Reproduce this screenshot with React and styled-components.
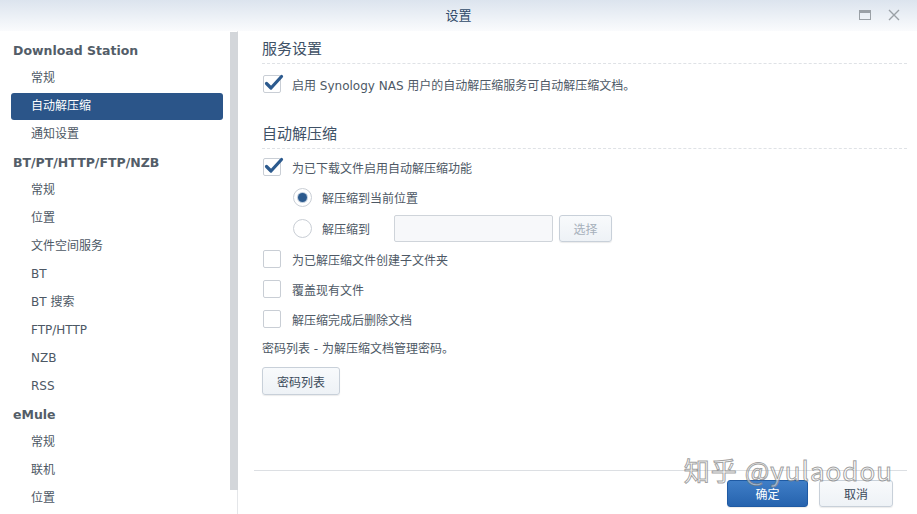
import styled, { createGlobalStyle } from "styled-components";

const GlobalStyle = createGlobalStyle`
  html, body {
    margin: 0;
    padding: 0;
    background: #ffffff;
  }
  body {
    font-family: "DejaVu Sans", "Noto Sans CJK SC", sans-serif;
  }
`;

const navItems = [
  { label: "Download Station", group: true },
  { label: "常规" },
  { label: "自动解压缩", active: true },
  { label: "通知设置" },
  { label: "BT/PT/HTTP/FTP/NZB", group: true },
  { label: "常规" },
  { label: "位置" },
  { label: "文件空间服务" },
  { label: "BT" },
  { label: "BT 搜索" },
  { label: "FTP/HTTP" },
  { label: "NZB" },
  { label: "RSS" },
  { label: "eMule", group: true },
  { label: "常规" },
  { label: "联机" },
  { label: "位置" },
];

function CheckBox({ checked }) {
  return (
    <Box>
      {checked && (
        <svg width="22" height="20" viewBox="0 0 22 20">
          <path
            d="M3.5 10.5 L8 15 L18.5 3.5"
            fill="none"
            stroke="#2c5a8e"
            strokeWidth="3.2"
            strokeLinecap="round"
            strokeLinejoin="round"
          />
        </svg>
      )}
    </Box>
  );
}

function Radio({ checked }) {
  return <RadioCircle>{checked && <RadioDot />}</RadioCircle>;
}

export default function App() {
  return (
    <>
      <GlobalStyle />
      <Window>
        <TitleBar>
          <Title>设置</Title>
          <WinControls>
            <svg width="12" height="10" viewBox="0 0 12 10">
              <rect x="0.5" y="0.5" width="11" height="9" fill="none" stroke="#9aa0a6" />
              <rect x="0.5" y="0.5" width="11" height="2.5" fill="#9aa0a6" />
            </svg>
            <svg width="12" height="12" viewBox="0 0 12 12">
              <path d="M1 1 L11 11 M11 1 L1 11" stroke="#9aa0a6" strokeWidth="1.4" />
            </svg>
          </WinControls>
        </TitleBar>
        <Body>
          <Sidebar>
            <NavList>
              {navItems.map((item, i) =>
                item.group ? (
                  <GroupLabel key={i}>{item.label}</GroupLabel>
                ) : (
                  <NavItem key={i} $active={item.active}>
                    {item.label}
                  </NavItem>
                )
              )}
            </NavList>
            <ScrollTrack>
              <ScrollThumb />
            </ScrollTrack>
          </Sidebar>
          <Main>
            <Content>
              <Heading>服务设置</Heading>
              <Row $mt={5}>
                <CheckBox checked />
                <Label>启用 Synology NAS 用户的自动解压缩服务可自动解压缩文档。</Label>
              </Row>
              <Heading $mt={17}>自动解压缩</Heading>
              <Row $mt={3}>
                <CheckBox checked />
                <Label>为已下载文件启用自动解压缩功能</Label>
              </Row>
              <Row $indent $h={31}>
                <Radio checked />
                <Label>解压缩到当前位置</Label>
              </Row>
              <Row $indent $h={31}>
                <Radio />
                <Label $w={72}>解压缩到</Label>
                <TextInput />
                <Button $w={53} $disabled>
                  选择
                </Button>
              </Row>
              <Row>
                <CheckBox />
                <Label>为已解压缩文件创建子文件夹</Label>
              </Row>
              <Row>
                <CheckBox />
                <Label>覆盖现有文件</Label>
              </Row>
              <Row>
                <CheckBox />
                <Label>解压缩完成后删除文档</Label>
              </Row>
              <Note>密码列表 - 为解压缩文档管理密码。</Note>
              <Button $w={78} $h={28}>密码列表</Button>
            </Content>
            <Footer>
              <Button $w={81} $primary>
                确定
              </Button>
              <Button $w={74}>取消</Button>
            </Footer>
          </Main>
        </Body>
        <Watermark>知乎 @yulaodou</Watermark>
      </Window>
    </>
  );
}

const Window = styled.div`
  position: relative;
  width: 917px;
  height: 514px;
  display: flex;
  flex-direction: column;
  overflow: hidden;
  background: #fff;
  color: #4d5865;
  font-size: 12px;
`;

const TitleBar = styled.div`
  height: 31px;
  flex-shrink: 0;
  display: flex;
  align-items: center;
  justify-content: center;
  position: relative;
  background: linear-gradient(to bottom, #dce4ee 0%, #eef2f7 60%, #fafbfd 100%);
`;

const Title = styled.div`
  font-size: 13px;
  color: #2f4a68;
  margin-top: -2px;
`;

const WinControls = styled.div`
  position: absolute;
  right: 17px;
  top: 9px;
  display: flex;
  align-items: center;
  gap: 17px;
`;

const Body = styled.div`
  flex: 1;
  display: flex;
  min-height: 0;
`;

const Sidebar = styled.div`
  width: 238px;
  display: flex;
  flex-shrink: 0;
`;

const NavList = styled.div`
  width: 230px;
  padding-top: 6px;
  display: flex;
  flex-direction: column;
`;

const GroupLabel = styled.div`
  height: 28px;
  line-height: 28px;
  padding-left: 13px;
  font-weight: bold;
  font-size: 12.5px;
  color: #535d68;
  white-space: nowrap;
`;

const NavItem = styled.div`
  height: 27px;
  line-height: 27px;
  margin: 0 7px 1px 11px;
  padding-left: 20px;
  border-radius: 3px;
  font-size: 12px;
  color: ${(p) => (p.$active ? "#ffffff" : "#4d5865")};
  background: ${(p) => (p.$active ? "#2b5589" : "transparent")};
`;

const ScrollTrack = styled.div`
  width: 8px;
  border-right: 1px solid #e4e6e9;
  box-sizing: border-box;
`;

const ScrollThumb = styled.div`
  margin-top: 1px;
  height: 458px;
  width: 8px;
  background: #d3d6da;
`;

const Main = styled.div`
  flex: 1;
  display: flex;
  flex-direction: column;
  margin: 0 10px 0 16px;
`;

const Content = styled.div`
  flex: 1;
  padding-left: 8px;
  display: flex;
  flex-direction: column;
  align-items: flex-start;
`;

const Heading = styled.div`
  align-self: stretch;
  margin-top: ${(p) => p.$mt || 0}px;
  padding: 9px 0 5px;
  line-height: 18px;
  font-size: 15px;
  color: #3e5166;
  border-bottom: 1px dashed #dfe2e6;
`;

const Row = styled.div`
  display: flex;
  align-items: center;
  height: ${(p) => p.$h || 30}px;
  margin-top: ${(p) => p.$mt || 0}px;
  padding-left: ${(p) => (p.$indent ? 31 : 1)}px;
`;

const Box = styled.div`
  position: relative;
  width: 18px;
  height: 18px;
  box-sizing: border-box;
  border: 1px solid #c9ced5;
  border-radius: 2px;
  background: #fff;
  margin-right: 11px;
  flex-shrink: 0;

  svg {
    position: absolute;
    left: -1px;
    top: -3px;
  }
`;

const RadioCircle = styled.div`
  width: 19px;
  height: 19px;
  box-sizing: border-box;
  border: 1px solid #c9ced5;
  border-radius: 50%;
  background: #fff;
  display: flex;
  align-items: center;
  justify-content: center;
  margin-right: 10px;
  flex-shrink: 0;
`;

const RadioDot = styled.div`
  width: 9px;
  height: 9px;
  border-radius: 50%;
  background: #2c5a8e;
  box-shadow: 0 0 0 1px rgba(44, 90, 142, 0.3);
`;

const Label = styled.span`
  font-size: 12px;
  color: #4d5865;
  width: ${(p) => (p.$w ? `${p.$w}px` : "auto")};
  white-space: nowrap;
`;

const TextInput = styled.div`
  width: 159px;
  height: 27px;
  box-sizing: border-box;
  border: 1px solid #cfd4da;
  border-radius: 2px;
  background: #f7f8fa;
  margin-right: 6px;
`;

const Button = styled.div`
  width: ${(p) => p.$w}px;
  height: ${(p) => p.$h || 27}px;
  box-sizing: border-box;
  display: flex;
  align-items: center;
  justify-content: center;
  border-radius: 3px;
  font-size: 12px;
  border: 1px solid ${(p) => (p.$primary ? "#1f5aa3" : "#c8d0d9")};
  color: ${(p) => (p.$primary ? "#fff" : p.$disabled ? "#a6b0bb" : "#3b4a5b")};
  background: ${(p) =>
    p.$primary
      ? "linear-gradient(to bottom, #3f7ec7, #2663ae)"
      : "linear-gradient(to bottom, #f8fafc, #eef2f6)"};
  box-shadow: 0 1px 1px rgba(0, 0, 0, 0.08);
`;

const Note = styled.div`
  height: 30px;
  line-height: 30px;
  font-size: 12px;
  color: #4d5865;
  margin-bottom: 3px;
`;

const Footer = styled.div`
  height: 44px;
  box-sizing: border-box;
  border-top: 1px solid #dcdfe3;
  display: flex;
  justify-content: flex-end;
  gap: 11px;
  padding: 9px 14px 0 0;
`;

const Watermark = styled.div`
  position: absolute;
  right: 24px;
  bottom: 26px;
  font-family: "Noto Sans CJK SC", "DejaVu Sans", sans-serif;
  font-size: 26px;
  letter-spacing: 1px;
  color: rgba(255, 255, 255, 0.55);
  -webkit-text-stroke: 1px rgba(120, 120, 120, 0.7);
  pointer-events: none;
`;
